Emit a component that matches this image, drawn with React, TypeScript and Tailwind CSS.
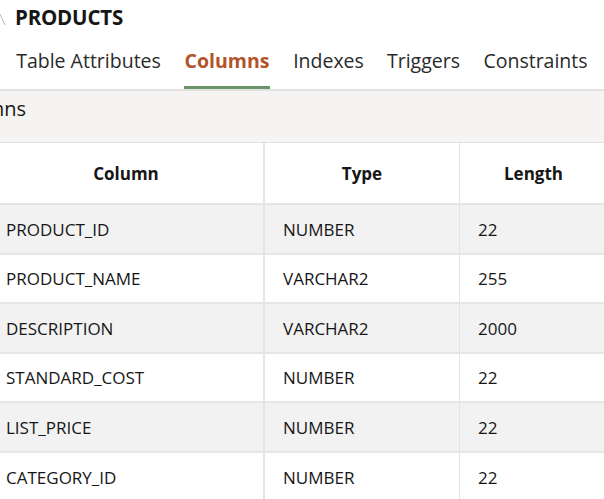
import React from "react";

const rows: [string, string, string][] = [
  ["PRODUCT_ID", "NUMBER", "22"],
  ["PRODUCT_NAME", "VARCHAR2", "255"],
  ["DESCRIPTION", "VARCHAR2", "2000"],
  ["STANDARD_COST", "NUMBER", "22"],
  ["LIST_PRICE", "NUMBER", "22"],
  ["CATEGORY_ID", "NUMBER", "22"],
];

const tabs = [
  { label: "Table Attributes", w: "w-[143px]", active: false },
  { label: "Columns", w: "w-[86px]", active: true },
  { label: "Indexes", w: "w-[69px]", active: false },
  { label: "Triggers", w: "w-[73px]", active: false },
  { label: "Constraints", w: "w-[103px]", active: false },
];

export default function App() {
  return (
    <div
      className="w-[604px] h-[499px] overflow-hidden bg-white text-[#161616]"
      style={{ fontFamily: '"Open Sans", "Noto Sans", sans-serif' }}
    >
      <div className="relative h-[35px] flex items-center pl-[15px]">
        <svg className="absolute left-0 top-[10px]" width="8" height="16" viewBox="0 0 8 16">
          <path d="M0 4 L5 15" stroke="#b8b8b8" strokeWidth="1" fill="none" />
        </svg>
        <span className="text-[20.5px] font-bold leading-none tracking-[-0.2px]">PRODUCTS</span>
      </div>
      <div className="h-[56px] flex items-end pl-[17px] gap-[24px] border-b-2 border-[#e2e2e2]">
        {tabs.map((t) => (
          <div
            key={t.label}
            className={`${t.w} h-[54px] flex items-center justify-center whitespace-nowrap text-[19.5px] pt-[1px] border-b-[3px] ${
              t.active ? "border-[#6b9467] text-[#b4532a] font-bold" : "border-transparent text-[#2a2a2a]"
            }`}
          >
            {t.label}
          </div>
        ))}
      </div>
      <div className="h-[52px] bg-[#f5f4f2] border-b border-[#e2e2e2] pt-[4px]">
        <div className="w-[26px] overflow-hidden flex justify-end whitespace-nowrap text-[20px] leading-[28px] font-medium">
          Columns
        </div>
      </div>
      <div className="ml-[-11px] w-[620px]">
        <div className="flex h-[62px] border-b-2 border-[#e4e4e4] text-[17px] font-bold">
          <div className="w-[276px] flex items-center justify-center border-r-2 border-[#e4e4e4] pt-[1px]">Column</div>
          <div className="w-[195px] flex items-center justify-center border-r border-[#e4e4e4] pt-[1px]">Type</div>
          <div className="flex-1 flex items-center justify-center pr-[2px] pt-[1px]">Length</div>
        </div>
        {rows.map((r, i) => (
          <div
            key={r[0]}
            className={`flex h-[49.6px] border-b-2 border-[#e6e6e6] text-[17px] ${
              i % 2 === 0 ? "bg-[#f2f2f2]" : "bg-white"
            }`}
          >
            <div className="w-[276px] flex items-center pl-[17px] pt-[1px] border-r-2 border-[#e4e4e4]">{r[0]}</div>
            <div className="w-[195px] flex items-center pl-[18px] pt-[1px] border-r border-[#e4e4e4]">{r[1]}</div>
            <div className="flex-1 flex items-center pl-[18px] pt-[1px]">{r[2]}</div>
          </div>
        ))}
      </div>
    </div>
  );
}
